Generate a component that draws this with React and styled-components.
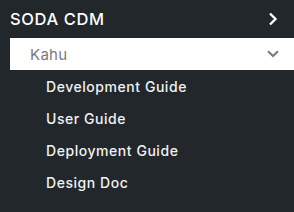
import React from 'react';
import styled, { createGlobalStyle } from 'styled-components';

const GlobalStyle = createGlobalStyle`
  html, body {
    margin: 0;
    padding: 0;
    background: #21272a;
  }
  body {
    font-family: Inter, "Open Sans", sans-serif;
  }
`;

const Sidebar = styled.nav`
  width: 294px;
  height: 212px;
  background: #21272a;
  overflow: hidden;
`;

const Header = styled.div`
  display: flex;
  align-items: center;
  justify-content: space-between;
  height: 38px;
  padding: 0 16px 0 10px;
  box-sizing: border-box;
`;

const Title = styled.span`
  color: #ffffff;
  font-size: 16.5px;
  font-weight: 500;
  letter-spacing: 0.6px;
`;

const Select = styled.div`
  display: flex;
  align-items: center;
  justify-content: space-between;
  height: 32px;
  margin-left: 10px;
  padding: 0 15px 0 20px;
  background: #ffffff;
  box-sizing: border-box;
`;

const SelectLabel = styled.span`
  color: #7a7a7a;
  font-size: 15px;
  letter-spacing: 0.3px;
`;

const List = styled.ul`
  list-style: none;
  margin: 0;
  padding: 0 0 0 46px;
`;

const Item = styled.li`
  height: 32px;
  display: flex;
  align-items: center;
  color: #f2f2f2;
  font-size: 14px;
  font-weight: 500;
  letter-spacing: 0.55px;
`;

const ChevronRight = () => (
  <svg width="10" height="14" viewBox="0 0 10 14">
    <path d="M2 1.5 L7.5 7 L2 12.5" fill="none" stroke="#ffffff" strokeWidth="2.4" />
  </svg>
);

const ChevronDown = () => (
  <svg width="12" height="8" viewBox="0 0 12 8">
    <path d="M1 1.2 L6 6 L11 1.2" fill="none" stroke="#7a7a7a" strokeWidth="2" />
  </svg>
);

const items = ['Development Guide', 'User Guide', 'Deployment Guide', 'Design Doc'];

export default function App() {
  return (
    <>
      <GlobalStyle />
      <Sidebar>
        <Header>
          <Title>SODA CDM</Title>
          <ChevronRight />
        </Header>
        <Select>
          <SelectLabel>Kahu</SelectLabel>
          <ChevronDown />
        </Select>
        <List>
          {items.map((i) => (
            <Item key={i}>{i}</Item>
          ))}
        </List>
      </Sidebar>
    </>
  );
}
